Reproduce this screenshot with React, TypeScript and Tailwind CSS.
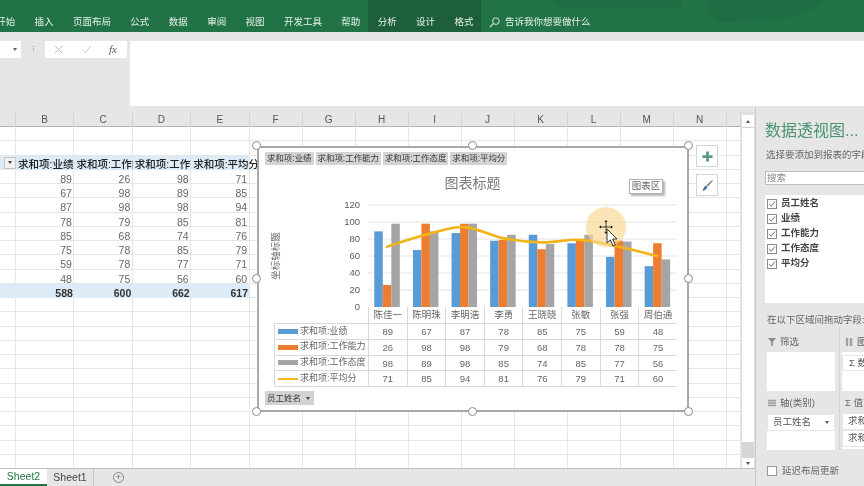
import React from "react";

const ribbonTabs = ["开始", "插入", "页面布局", "公式", "数据", "审阅", "视图", "开发工具", "帮助"];
const contextTabs = ["分析", "设计", "格式"];
const colLetters = ["", "B", "C", "D", "E", "F", "G", "H", "I", "J", "K", "L", "M", "N", ""];
const names = ["陈佳一", "陈明珠", "李明浩", "李勇", "王晓晓", "张敏", "张强", "周伯通"];
const sales = [89, 67, 87, 78, 85, 75, 59, 48];
const ability = [26, 98, 98, 79, 68, 78, 78, 75];
const attitude = [98, 89, 98, 85, 74, 85, 77, 56];
const average = [71, 85, 94, 81, 76, 79, 71, 60];
const totals = [588, 600, 662, 617];
const heads = ["求和项:业绩", "求和项:工作能力", "求和项:工作态度", "求和项:平均分"];
const fields = ["员工姓名", "业绩", "工作能力", "工作态度", "平均分"];
const rowsCount = 24;

const X0 = 367.7;
const CW = 38.62;
const yOf = (v: number) => 307 - 0.85 * v;

function smoothPath(vals: number[]) {
  const p = vals.map((v, i) => [X0 + CW * (i + 0.5), yOf(v)]);
  let d = `M${p[0][0]} ${p[0][1]}`;
  for (let i = 0; i < p.length - 1; i++) {
    const a = p[Math.max(0, i - 1)];
    const b = p[i];
    const c = p[i + 1];
    const e = p[Math.min(p.length - 1, i + 2)];
    d += ` C${b[0] + (c[0] - a[0]) / 6} ${b[1] + (c[1] - a[1]) / 6} ${c[0] - (e[0] - b[0]) / 6} ${c[1] - (e[1] - b[1]) / 6} ${c[0]} ${c[1]}`;
  }
  return d;
}

function Check() {
  return (
    <span className="flex h-[10px] w-[10px] shrink-0 items-center justify-center border border-[#8a8a8a] bg-white">
      <svg viewBox="0 0 10 10" className="h-[8px] w-[8px]">
        <path d="M1.5 5.2 L4 7.8 L8.8 1.8" fill="none" stroke="#555" strokeWidth="1" />
      </svg>
    </span>
  );
}

function Cell({ row, col }: { row: number; col: number }) {
  const base = "min-w-0 border-r border-b border-[#e6e6e6] whitespace-nowrap";
  if (row === 2) {
    if (col === 0)
      return (
        <div className="relative border-b border-[#e6e6e6] bg-[#ddebf7]">
          <span className="absolute left-[4px] top-[1px] flex h-[12px] w-[12px] items-center justify-center border border-[#c4c4c4] bg-[#f2f2f2]">
            <span className="h-0 w-0 border-x-[2.5px] border-t-[3px] border-x-transparent border-t-[#444]" />
          </span>
        </div>
      );
    if (col >= 1 && col <= 4)
      return (
        <div className={`${col === 4 ? "overflow-visible" : "overflow-hidden"} whitespace-nowrap bg-[#ddebf7] pl-[2px] pt-[1px] text-left text-[10.5px] font-medium leading-[14px] text-[#222]`}>
          {heads[col - 1]}
        </div>
      );
  }
  if (row >= 3 && row <= 10 && col >= 1 && col <= 4) {
    const data = [sales, ability, attitude, average][col - 1];
    return <div className={`${base} pr-[1.5px] pt-[2px] text-right text-[10.5px] leading-[14px] text-[#666]`}>{data[row - 3]}</div>;
  }
  if (row === 11 && col <= 4) {
    return (
      <div className={`${col === 0 ? "" : "pr-[1.5px] pt-[2px]"} min-w-0 border-b border-[#ddebf7] bg-[#ddebf7] text-right text-[10.5px] font-bold leading-[14px] text-[#333]`}>
        {col > 0 ? totals[col - 1] : ""}
      </div>
    );
  }
  return <div className={base} />;
}

function FieldButton({ label }: { label: string }) {
  return (
    <span className="flex h-[13px] items-center whitespace-nowrap bg-[#d4d4d4] px-[2px] text-[8.45px] text-[#333]">{label}</span>
  );
}

const tableRows = [
  { label: "求和项:业绩", data: sales, key: "h-[5px] bg-[#5b9bd5]" },
  { label: "求和项:工作能力", data: ability, key: "h-[5px] bg-[#ed7d31]" },
  { label: "求和项:工作态度", data: attitude, key: "h-[5px] bg-[#a5a5a5]" },
  { label: "求和项:平均分", data: average, key: "h-[2px] bg-[#f5b915]" },
];

const handles = [
  "left-[-7px] top-[-7px]",
  "left-[209px] top-[-7px]",
  "left-[425px] top-[-7px]",
  "left-[-7px] top-[126px]",
  "left-[425px] top-[126px]",
  "left-[-7px] top-[259px]",
  "left-[209px] top-[259px]",
  "left-[425px] top-[259px]",
];

function Chart() {
  return (
    <div className="absolute left-[257px] top-[146px] h-[266px] w-[432px] border-2 border-[#a9a9a9] bg-white">
      <div className="flex gap-[2px] pl-[6px] pt-[4px]">
        {heads.map((h) => (
          <FieldButton key={h} label={h} />
        ))}
      </div>
      <div className="mt-[9px] h-[18px] pr-[1px] text-center text-[14px] leading-[18px] text-[#7a7a7a]">图表标题</div>
      <svg viewBox="259 197 428 110" className="mt-[5px] block h-[110px] w-[428px] overflow-visible">
        {[20, 40, 60, 80, 100, 120].map((v) => (
          <line key={v} x1="368" x2="677" y1={yOf(v)} y2={yOf(v)} stroke="#e4e4e4" strokeWidth="1" />
        ))}
        {[0, 20, 40, 60, 80, 100, 120].map((v) => (
          <text key={v} x="360" y={yOf(v) + 3} textAnchor="end" fontSize="9.5" fill="#595959" fontFamily="Liberation Sans">
            {v}
          </text>
        ))}
        <text transform="translate(279 256) rotate(-90)" textAnchor="middle" fontSize="9.5" fill="#666" fontFamily="Noto Sans CJK SC">
          坐标轴标题
        </text>
        {names.map((_, i) => {
          const x = X0 + CW * i + 6.6;
          return (
            <g key={i}>
              <rect x={x} y={yOf(sales[i])} width="8.5" height={0.85 * sales[i]} fill="#5b9bd5" />
              <rect x={x + 8.5} y={yOf(ability[i])} width="8.5" height={0.85 * ability[i]} fill="#ed7d31" />
              <rect x={x + 17} y={yOf(attitude[i])} width="8.5" height={0.85 * attitude[i]} fill="#a5a5a5" />
            </g>
          );
        })}
        <path d={smoothPath(average)} fill="none" stroke="#f2b418" strokeWidth="2.6" strokeLinecap="round" />
      </svg>
      <div className="ml-[15px] grid grid-cols-[94px_repeat(8,38.62px)] text-center text-[9.5px] text-[#666]">
        <div className="h-[16px]" />
        {names.map((n) => (
          <div key={n} className="h-[16px] border-l border-[#d9d9d9] text-[9.5px] leading-[15px]">
            {n}
          </div>
        ))}
        {tableRows.map((r) => (
          <React.Fragment key={r.label}>
            <div className="flex h-[15.75px] items-center gap-[2px] border-l border-t border-[#d9d9d9] pl-[3px] text-left">
              <span className={`w-[20px] shrink-0 ${r.key}`} />
              <span className="whitespace-nowrap text-[9px]">{r.label}</span>
            </div>
            {r.data.map((v, i) => (
              <div key={i} className="h-[15.75px] border-l border-t border-[#d9d9d9] leading-[15px] last:border-r">
                {v}
              </div>
            ))}
          </React.Fragment>
        ))}
        <div className="col-span-9 border-t border-[#d9d9d9]" />
      </div>
      <div className="ml-[6px] mt-[4px] flex h-[14px] w-[49px] items-center gap-[5px] whitespace-nowrap bg-[#d2d2d2] pl-[2px] text-[8.5px] text-[#333]">
        员工姓名
        <span className="h-0 w-0 border-x-[2.5px] border-t-[3px] border-x-transparent border-t-[#444]" />
      </div>
      {handles.map((h) => (
        <span key={h} className={`absolute h-[9px] w-[9px] rounded-full border border-[#8c8c8c] bg-white ${h}`} />
      ))}
    </div>
  );
}

function SidePanel() {
  return (
    <aside className="flex-1 overflow-hidden border-l border-[#c8c8c8] bg-[#e6e6e6] pl-[9px] pt-[14px]">
      <div className="h-[20px] whitespace-nowrap text-[16px] leading-[20px] text-[#4a9270]">数据透视图...</div>
      <div className="mt-[7px] h-[14px] whitespace-nowrap pl-[1px] text-[9.5px] leading-[14px] text-[#666]">选择要添加到报表的字段:</div>
      <div className="mt-[9px] h-[14px] w-[110px] border border-[#bdbdbd] bg-white pl-[1px] text-[9.5px] leading-[12px] text-[#888]">搜索</div>
      <div className="mt-[10px] flex h-[108px] w-[110px] flex-col bg-white pl-[2px] pt-[1px]">
        {fields.map((f) => (
          <div key={f} className="flex h-[15px] items-center gap-[4px] text-[9.5px] font-bold text-[#444]">
            <Check />
            {f}
          </div>
        ))}
      </div>
      <div className="mt-[10px] h-[14px] whitespace-nowrap pl-[2px] text-[9.5px] leading-[14px] text-[#666]">在以下区域间拖动字段:</div>
      <div className="ml-[2px] flex w-[110px] gap-[4px]">
        <div className="w-[68px] shrink-0">
          <div className="mt-[8px] flex h-[14px] items-center gap-[4px] pl-[1px] text-[9.5px] text-[#666]">
            <svg viewBox="0 0 10 10" className="h-[8px] w-[8px]"><path d="M0 0 H10 L6 5 V10 H4 V5 Z" fill="#8c8c8c" /></svg>
            筛选
          </div>
          <div className="mt-[3px] h-[39px] bg-white" />
          <div className="mt-[5px] flex h-[14px] items-center gap-[4px] pl-[1px] text-[9.5px] text-[#666]">
            <svg viewBox="0 0 10 10" className="h-[8px] w-[8px]"><path d="M0 1 H10 V3 H0 Z M0 4 H10 V6 H0 Z M0 7 H10 V9 H0 Z" fill="#a0a0a0" /></svg>
            轴(类别)
          </div>
          <div className="mt-[4px] h-[36px] bg-white">
            <div className="flex h-[17px] items-center justify-between border border-[#e6e6e6] px-[5px] text-[9.5px] text-[#555]">
              员工姓名
              <span className="h-0 w-0 border-x-[2.5px] border-t-[3px] border-x-transparent border-t-[#555]" />
            </div>
          </div>
        </div>
        <div className="w-[60px] shrink-0 border-l border-[#d4d4d4] pl-[2px]">
          <div className="mt-[8px] flex h-[14px] items-center gap-[4px] whitespace-nowrap pl-[3px] text-[9.5px] text-[#666]">
            <svg viewBox="0 0 10 10" className="h-[8px] w-[8px] shrink-0"><path d="M1 0 H4 V10 H1 Z M6 0 H9 V10 H6 Z" fill="#a0a0a0" /></svg>
            图例(系列)
          </div>
          <div className="mt-[3px] h-[39px] bg-white pt-[3px]">
            <div className="flex h-[16px] items-center gap-[3px] whitespace-nowrap border border-[#e6e6e6] pl-[6px] text-[9.5px] text-[#555]">Σ 数值</div>
          </div>
          <div className="mt-[5px] flex h-[14px] items-center gap-[4px] pl-[3px] text-[9.5px] text-[#666]">Σ 值</div>
          <div className="mt-[3px] h-[36px] bg-white">
            <div className="flex h-[17px] items-center whitespace-nowrap border border-[#e6e6e6] pl-[5px] text-[9.5px] text-[#555]">求和项:业绩</div>
            <div className="flex h-[17px] items-center whitespace-nowrap border border-[#e6e6e6] pl-[5px] text-[9.5px] text-[#555]">求和项:工作能力</div>
          </div>
        </div>
      </div>
      <div className="ml-[2px] mt-[16px] flex h-[10px] items-center gap-[5px] whitespace-nowrap text-[9.5px] text-[#666]">
        <span className="h-[10px] w-[10px] shrink-0 border border-[#999] bg-white" />
        延迟布局更新
      </div>
    </aside>
  );
}

export default function App() {
  return (
    <div className="relative flex h-[486px] w-[864px] flex-col overflow-hidden bg-[#e6e6e6] font-['Liberation_Sans','Noto_Sans_CJK_SC',sans-serif] blur-[0.35px]">
      {/* ribbon */}
      <header className="relative flex h-[32px] shrink-0 items-end overflow-hidden bg-[#217346] pb-[3px] text-[9.5px] leading-[14px] text-[#e6f0ea]">
        <svg className="absolute right-0 top-0 h-[32px] w-[320px]" viewBox="544 0 320 32">
          <path d="M552 0 H682 V9 H560 Z" fill="#1f6d42" />
          <path d="M705 0 H822 C815 14 790 22 716 22 Z" fill="#1f6d42" />
        </svg>
        <div className="relative z-10 ml-[-13.5px] flex">
          {ribbonTabs.map((t) => (
            <span key={t} className="shrink-0 px-[9.7px]">{t}</span>
          ))}
        </div>
        <div className="absolute left-[368px] top-0 flex h-[32px] w-[113px] items-end bg-[#1c5f3a] pb-[3px]">
          {contextTabs.map((t) => (
            <span key={t} className="shrink-0 px-[9.7px]">{t}</span>
          ))}
        </div>
        <div className="absolute left-[489px] top-[15px] flex items-center gap-[5px]">
          <svg viewBox="0 0 12 12" className="h-[11px] w-[11px]">
            <circle cx="7.5" cy="4.5" r="3.6" fill="none" stroke="#e6f0ea" strokeWidth="1" />
            <path d="M5 7 L1 11" stroke="#e6f0ea" strokeWidth="1.1" />
          </svg>
          <span className="text-[9.5px]">告诉我你想要做什么</span>
        </div>
      </header>

      {/* formula bar */}
      <div className="flex h-[75px] shrink-0 items-start pt-[9px]">
        <div className="flex h-[17px] w-[21px] items-center justify-end bg-white pr-[4px]">
          <span className="h-0 w-0 border-x-[2px] border-t-[3px] border-x-transparent border-t-[#666]" />
        </div>
        <div className="flex w-[24px] flex-col items-center gap-[1px] pl-[1px] pt-[5px]">
          <span className="h-[1px] w-[1px] bg-[#999]" />
          <span className="h-[1px] w-[1px] bg-[#999]" />
          <span className="h-[1px] w-[1px] bg-[#999]" />
        </div>
        <div className="flex h-[17px] w-[82px] items-center bg-white text-[#aaa]">
          <svg viewBox="0 0 10 10" className="ml-[9px] h-[9px] w-[9px]"><path d="M1 1 L9 9 M9 1 L1 9" stroke="#b5b5b5" strokeWidth="1" /></svg>
          <svg viewBox="0 0 10 10" className="ml-[19px] h-[9px] w-[9px]"><path d="M1 5.5 L4 8.5 L9.5 1.5" fill="none" stroke="#c0c0c0" strokeWidth="1" /></svg>
          <span className="ml-[18px] font-['Liberation_Serif',serif] text-[11px] italic text-[#555]">fx</span>
        </div>
        <div className="ml-[3px] h-[65px] flex-1 bg-white" />
      </div>

      {/* body */}
      <div className="flex min-h-0 flex-1">
        <div className="flex w-[755px] shrink-0 flex-col pt-[5px]">
          <div className="flex min-h-0 flex-1">
            <div className="flex w-[741px] shrink-0 flex-col overflow-hidden bg-white">
              <div className="grid h-[15px] shrink-0 grid-cols-[16px_repeat(4,58.4px)_repeat(9,53px)_1fr] border-b border-[#b5b5b5] bg-[#e6e6e6]">
                {colLetters.map((c, i) => (
                  <div key={i} className="border-r border-[#d4d4d4] text-center text-[10px] leading-[15px] text-[#555]">
                    {c}
                  </div>
                ))}
              </div>
              <div className="grid flex-1 grid-cols-[16px_repeat(4,58.4px)_repeat(9,53px)_1fr] auto-rows-[14.25px] overflow-hidden">
                {Array.from({ length: rowsCount * 15 }).map((_, k) => (
                  <Cell key={k} row={Math.floor(k / 15)} col={k % 15} />
                ))}
              </div>
            </div>
            <div className="flex w-[14px] shrink-0 flex-col bg-[#e0e0e0] px-[1px] pt-[3px]">
              <div className="flex h-[12px] items-center justify-center bg-white">
                <span className="h-0 w-0 border-x-[2.5px] border-b-[3px] border-x-transparent border-b-[#555]" />
              </div>
              <div className="h-[315px] border-t border-[#d0d0d0] bg-white" />
              <div className="flex-1 bg-[#d6d6d6]" />
              <div className="flex h-[10px] items-center justify-center bg-white">
                <span className="h-0 w-0 border-x-[2.5px] border-t-[3px] border-x-transparent border-t-[#555]" />
              </div>
            </div>
          </div>
          <div className="flex h-[18px] shrink-0 items-stretch border-t border-[#bdbdbd] text-[10.5px]">
            <span className="flex w-[47px] items-center justify-center border-b-2 border-[#217346] bg-white text-[#217346]">Sheet2</span>
            <span className="flex w-[47px] items-center justify-center border-r border-[#c4c4c4] text-[#444]">Sheet1</span>
            <span className="ml-[19px] mt-[3px] flex h-[11px] w-[11px] items-center justify-center rounded-full border border-[#888] text-[9px] leading-[9px] text-[#666]">+</span>
          </div>
        </div>
        <SidePanel />
      </div>

      <Chart />

      {/* chart side buttons */}
      <div className="absolute left-[696px] top-[145px] flex flex-col gap-[7px]">
        <div className="flex h-[22px] w-[22px] items-center justify-center border border-[#d4d4d4] bg-white">
          <svg viewBox="0 0 12 12" className="h-[11px] w-[11px]"><path d="M4.5 0.5 H7.5 V4.5 H11.5 V7.5 H7.5 V11.5 H4.5 V7.5 H0.5 V4.5 H4.5 Z" fill="#5a9a80" /></svg>
        </div>
        <div className="flex h-[22px] w-[22px] items-center justify-center border border-[#d4d4d4] bg-white">
          <svg viewBox="0 0 14 14" className="h-[13px] w-[13px]">
            <path d="M13 1 L12 3 L7.5 8 L6 6.5 L11 2 Z" fill="#7d8a94" />
            <path d="M5.5 7 L7 8.5 C6.5 11 4 12.5 1 12.5 C2.5 11.5 3 9.5 3.5 8.5 C4 7.8 4.8 7.3 5.5 7 Z" fill="#4a72a8" />
          </svg>
        </div>
      </div>

      {/* hover tip */}
      <div className="absolute left-[629px] top-[179px] flex h-[15px] w-[34px] items-center justify-center border border-[#b0b0b0] bg-white text-[9.5px] text-[#666] shadow-[2px_2px_2px_rgba(0,0,0,0.3)]">
        图表区
      </div>

      {/* pointer highlight */}
      <div className="absolute left-[586px] top-[207px] h-[40px] w-[40px] rounded-full bg-[#f9d58f]/65" />
      <svg className="absolute left-[598px] top-[219px] h-[30px] w-[26px]" viewBox="0 0 26 30">
        <path d="M8 2 V14 M2 8 H14" stroke="#111" strokeWidth="0.8" />
        <path d="M8 1 L6.5 3 H9.5 Z M8 15 L6.5 13 H9.5 Z M1 8 L3 6.5 V9.5 Z M15 8 L13 6.5 V9.5 Z" fill="#111" />
        <path d="M9 10 V24 L12.3 21 L15 27 L17.3 26 L14.7 20 L19 20 Z" fill="#fff" stroke="#222" strokeWidth="0.9" />
      </svg>
    </div>
  );
}
